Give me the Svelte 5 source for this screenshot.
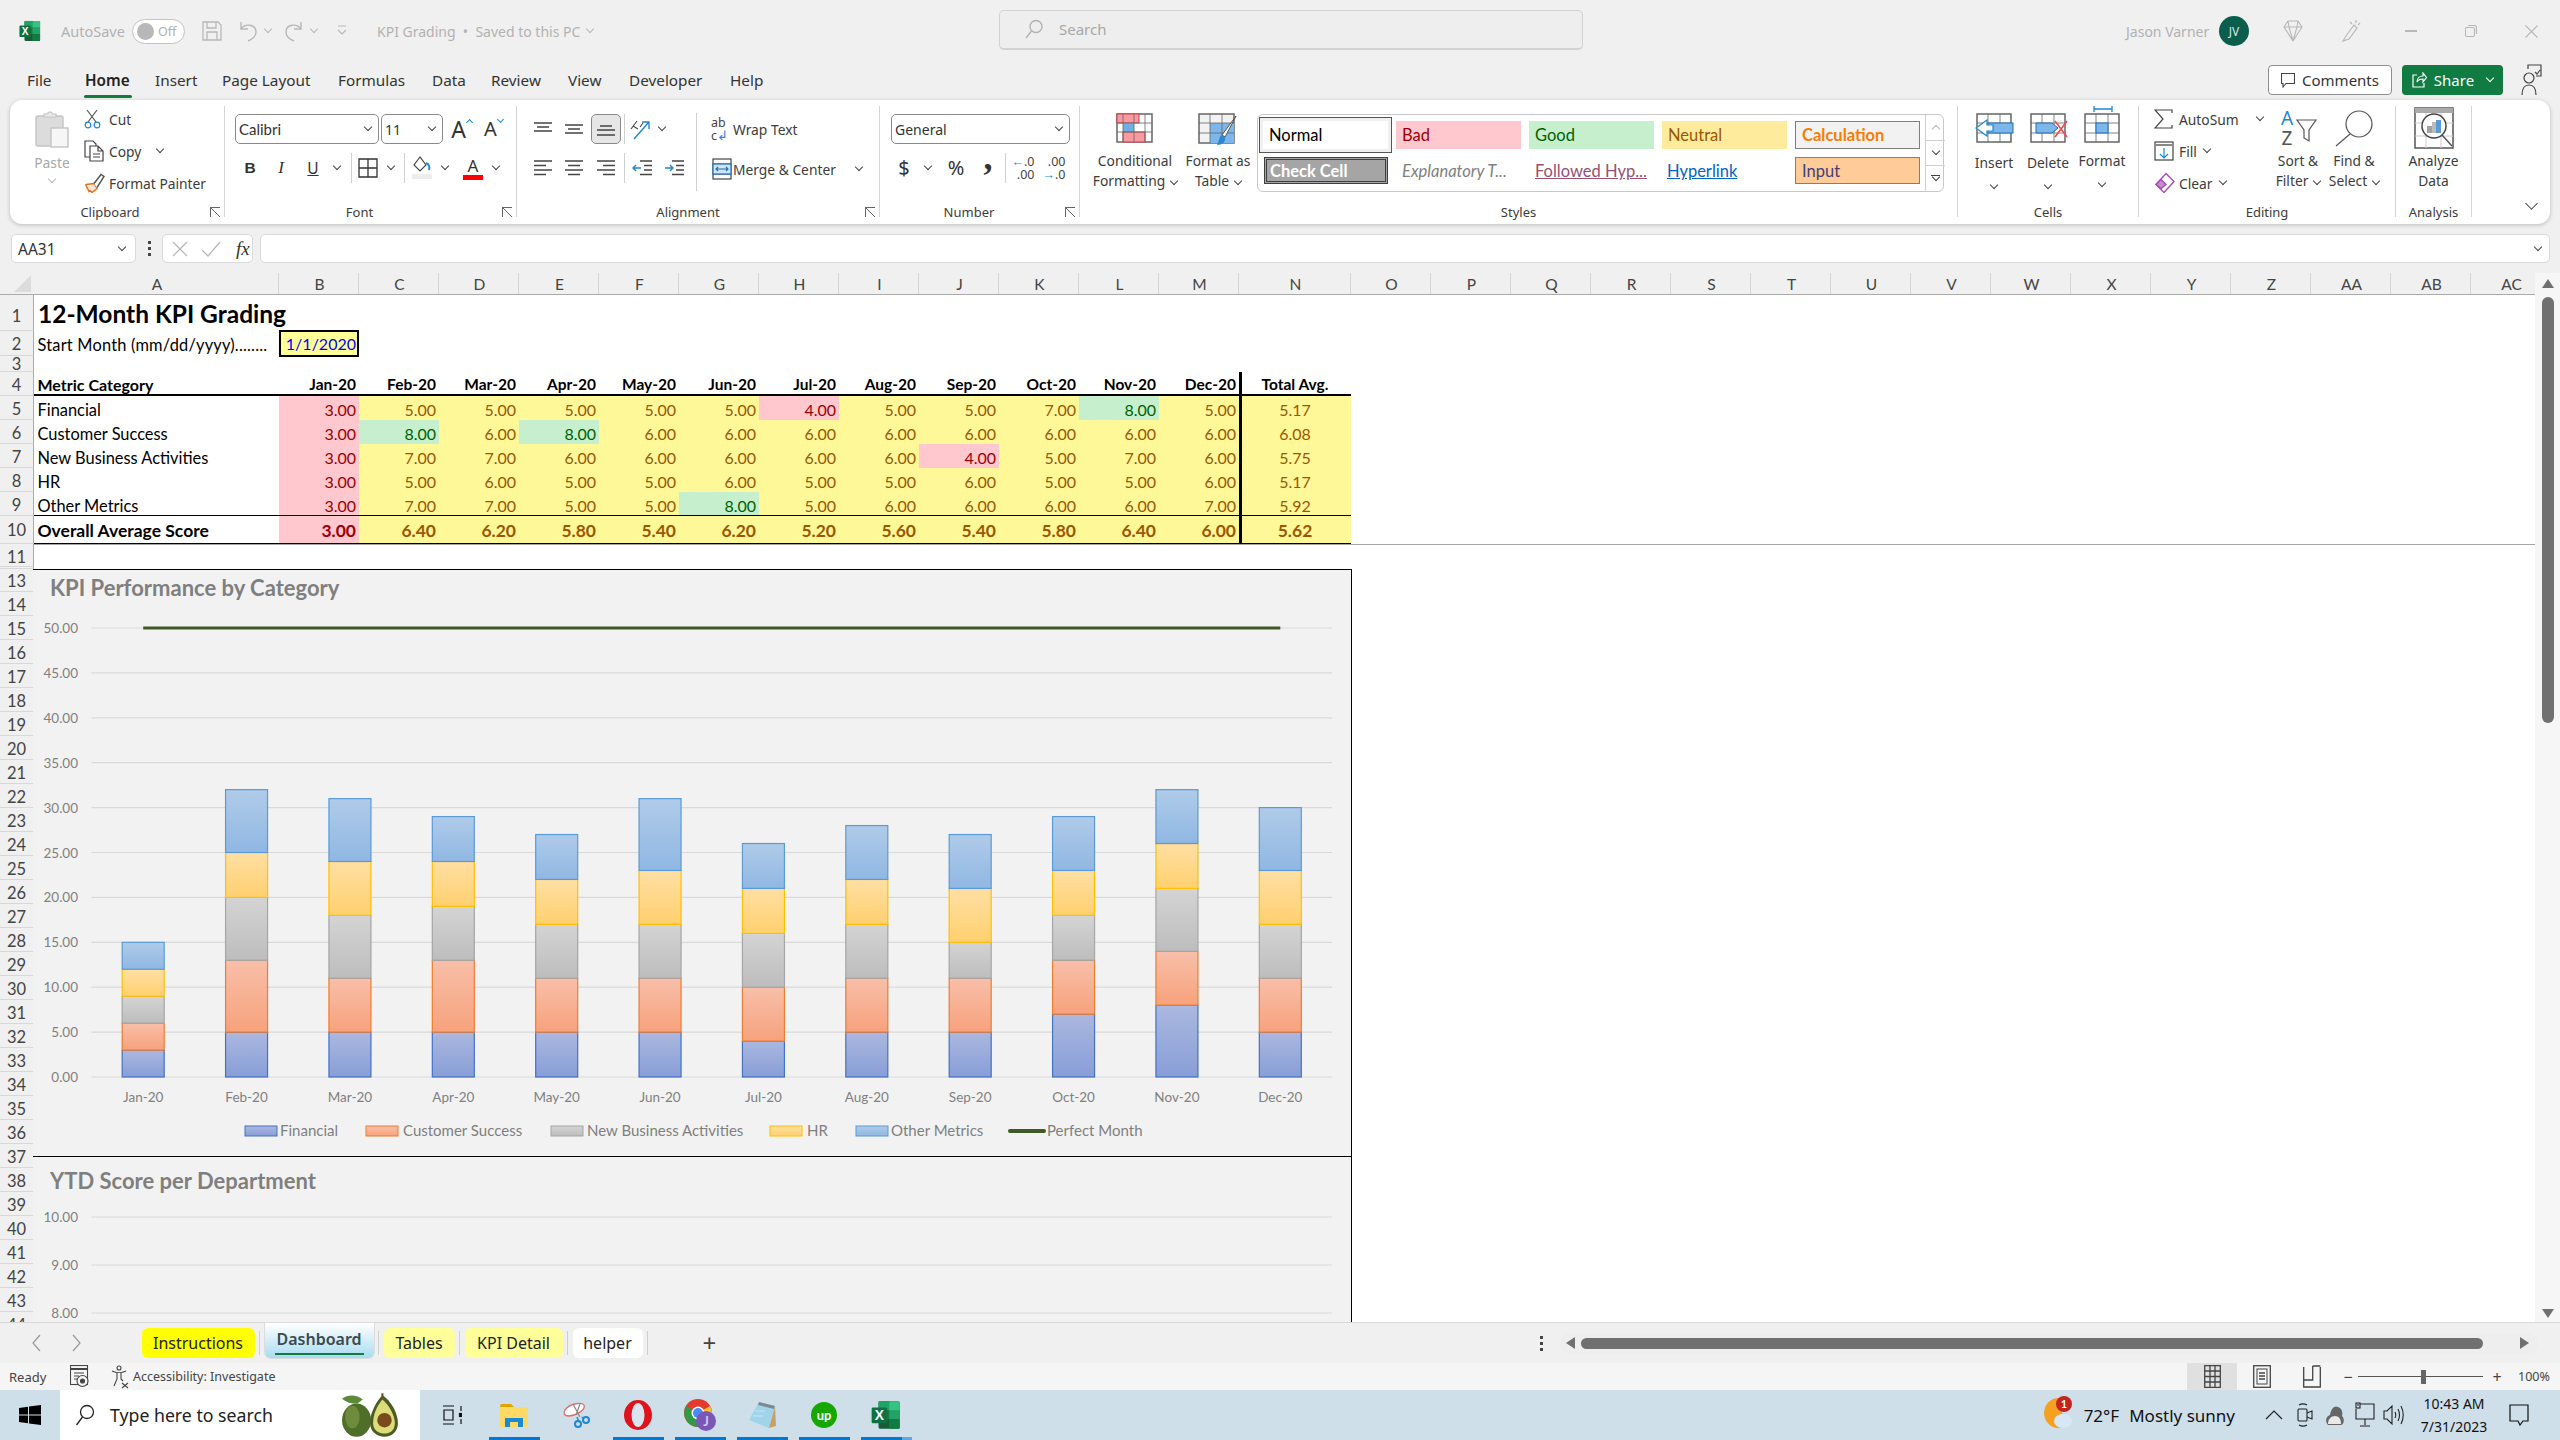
<script>
  const months = ["Jan-20", "Feb-20", "Mar-20", "Apr-20", "May-20", "Jun-20", "Jul-20", "Aug-20", "Sep-20", "Oct-20", "Nov-20", "Dec-20"];
  const colNames = ["B", "C", "D", "E", "F", "G", "H", "I", "J", "K", "L", "M"];
  const moreCols = ["O", "P", "Q", "R", "S", "T", "U", "V", "W", "X", "Y", "Z", "AA", "AB", "AC"];

  const table = [
    { name: "Financial", v: [3, 5, 5, 5, 5, 5, 4, 5, 5, 7, 8, 5], avg: "5.17" },
    { name: "Customer Success", v: [3, 8, 6, 8, 6, 6, 6, 6, 6, 6, 6, 6], avg: "6.08" },
    { name: "New Business Activities", v: [3, 7, 7, 6, 6, 6, 6, 6, 4, 5, 7, 6], avg: "5.75" },
    { name: "HR", v: [3, 5, 6, 5, 5, 6, 5, 5, 6, 5, 5, 6], avg: "5.17" },
    { name: "Other Metrics", v: [3, 7, 7, 5, 5, 8, 5, 6, 6, 6, 6, 7], avg: "5.92" }
  ];
  const overall = [3, 6.4, 6.2, 5.8, 5.4, 6.2, 5.2, 5.6, 5.4, 5.8, 6.4, 6];

  function tone(v) {
    if (v <= 4) return "bad";
    if (v >= 8) return "good";
    return "yel";
  }

  const lowerRows = Array.from({ length: 31 }, (_, i) => i + 14);

  // chart geometry, in page pixels
  const x0 = 91.5;
  const x1 = 1332;
  const y0 = 1077;
  const unit = 8.98;
  const step = (x1 - x0) / 12;
  const barW = 42;
  const ticks = [0, 5, 10, 15, 20, 25, 30, 35, 40, 45, 50];
  const series = ["fin", "cus", "nba", "hr", "oth"];
  const strokes = ["#4472c4", "#ed7d31", "#a5a5a5", "#ffc000", "#5b9bd5"];

  const bars = months.map((m, i) => {
    let acc = 0;
    const segs = table.map((r, s) => {
      const h = r.v[i] * unit;
      const y = y0 - acc - h;
      acc += h;
      return { y, h, s };
    });
    return { m, cx: x0 + step * (i + 0.5), segs };
  });

  const legend = [
    { x: 245, tx: 280, label: "Financial", s: 0 },
    { x: 366, tx: 403, label: "Customer Success", s: 1 },
    { x: 551, tx: 587, label: "New Business Activities", s: 2 },
    { x: 770, tx: 807, label: "HR", s: 3 },
    { x: 856, tx: 891, label: "Other Metrics", s: 4 }
  ];
</script>

{#snippet xl(size)}
  <svg width={size} height={size} viewBox="0 0 24 24">
    <rect x="6" y="1" width="17" height="22" rx="1.5" fill="#185c37" />
    <rect x="6" y="1" width="8.5" height="7.5" fill="#21a366" />
    <rect x="14.5" y="1" width="8.5" height="7.5" rx="1" fill="#33c481" />
    <rect x="6" y="8.5" width="8.5" height="7" fill="#107c41" />
    <rect x="14.5" y="8.5" width="8.5" height="7" fill="#21a366" />
    <rect x="14.5" y="15.5" width="8.5" height="7.5" rx="1" fill="#107c41" />
    <rect x="0.5" y="6" width="12.5" height="12.5" rx="1" fill="#0f7140" />
    <text x="6.7" y="16" text-anchor="middle" class="xl-x">X</text>
  </svg>
{/snippet}

<div class="app">
  <!-- title bar -->
  <header class="tb">
    <div class="tb-left">
      <span class="logo">{@render xl(22)}</span>
      <span class="autosave">AutoSave</span>
      <span class="toggle"><i></i><b>Off</b></span>
      <svg class="qa save" width="20" height="20" viewBox="0 0 20 20" fill="none" stroke="#b8b8b8" stroke-width="1.3">
        <path d="M1 1h15l3 3v15H1z" /><path d="M5 1v6h9V1M5 19v-8h10v8" />
      </svg>
      <svg class="qa undo" width="20" height="22" viewBox="0 0 20 22" fill="none" stroke="#b8b8b8" stroke-width="1.4">
        <path d="M2 2v7h7" /><path d="M2 9c4-6 15-5 15 3 0 4-3 7-8 9" />
      </svg>
      <span class="chev faint ch-undo"></span>
      <svg class="qa redo" width="20" height="22" viewBox="0 0 20 22" fill="none" stroke="#b8b8b8" stroke-width="1.4">
        <path d="M18 2v7h-7" /><path d="M18 9C14 3 3 4 3 12c0 4 3 7 8 9" />
      </svg>
      <span class="chev faint ch-redo"></span>
      <svg class="qa custom" width="10" height="12" viewBox="0 0 10 12" fill="none" stroke="#b8b8b8" stroke-width="1.2">
        <path d="M1 1h8M1 5l4 4 4-4" />
      </svg>
      <span class="doc">KPI Grading&nbsp; • &nbsp;Saved to this PC</span>
      <span class="chev faint ch-doc"></span>
    </div>
    <div class="search">
      <svg width="18" height="20" viewBox="0 0 18 20" fill="none" stroke="#b0b0b0" stroke-width="1.3">
        <circle cx="11" cy="7.5" r="6" /><path d="M6.5 12 1 19" />
      </svg>
      <span>Search</span>
    </div>
    <div class="tb-right">
      <span class="user">Jason Varner</span>
      <span class="avatar">JV</span>
      <svg class="tb-diamond" width="20" height="22" viewBox="0 0 20 22" fill="none" stroke="#b8b8b8" stroke-width="1.1">
        <path d="M5 1h10l4 6-9 14L1 7zM1 7h18M6 7l4 14 4-14M5 1l1 6M15 1l-1 6" />
      </svg>
      <svg class="tb-pen" width="20" height="24" viewBox="0 0 20 24" fill="none" stroke="#b8b8b8" stroke-width="1.2">
        <path d="M12 6 4 17l-3 5 6-2 8-11zM8 3l2 2M14 1v3M18 4l-2 2" />
      </svg>
      <span class="min"></span>
      <svg class="tb-rest" width="12" height="12" viewBox="0 0 12 12" fill="none" stroke="#b8b8b8" stroke-width="1.1">
        <rect x="0.5" y="2.5" width="9" height="9" rx="1.5" /><path d="M3 .5h6.5a2 2 0 0 1 2 2V9" />
      </svg>
      <svg class="tb-close" width="13" height="13" viewBox="0 0 13 13" stroke="#b8b8b8" stroke-width="1.1">
        <path d="M.5.5l12 12M12.5.5l-12 12" />
      </svg>
    </div>
  </header>

  <!-- ribbon tabs -->
  <nav class="tabs">
    <div class="tab-list">
      <span>File</span>
      <span class="on">Home</span>
      <span>Insert</span>
      <span>Page Layout</span>
      <span>Formulas</span>
      <span>Data</span>
      <span>Review</span>
      <span>View</span>
      <span>Developer</span>
      <span>Help</span>
    </div>
    <div class="tab-actions">
      <button class="comments">
        <svg width="14" height="15" viewBox="0 0 14 15" fill="none" stroke="#444" stroke-width="1.1"><path d="M.5.5h13v10H5l-3 3.5v-3.5H.5z" /></svg>
        Comments
      </button>
      <button class="share">
        <svg width="15" height="16" viewBox="0 0 15 16" fill="none" stroke="#fff" stroke-width="1.2"><path d="M5 3H1v12h11v-4M5 10c0-4 3-6 6-6V1l3.500 4.500L11 10V7c-3 0-5 1-6 3z" /></svg>
        Share <span class="chev white"></span>
      </button>
      <svg class="feedback" width="21" height="32" viewBox="0 0 21 32" fill="none" stroke="#444" stroke-width="1.2">
        <circle cx="8" cy="14" r="5" /><path d="M1 31c0-7 3-10 7-10s7 3 7 10M7 5V1h13v11h-5M14 8l2 2 3-4" />
      </svg>
    </div>
  </nav>

  <!-- ribbon -->
  <section class="ribbon">
    <div class="grp clip">
      <div class="body flex">
        <div class="paste">
          <svg width="34" height="37" viewBox="0 0 34 37" fill="none">
            <rect x="1" y="5" width="27" height="30" rx="2" fill="#dcdcdc" stroke="#c4c4c4" stroke-width="1.4" />
            <path d="M9 6V3h3l2-2h2l2 2h3v3z" fill="#e8e8e8" stroke="#c4c4c4" stroke-width="1.2" />
            <rect x="16" y="17" width="17" height="19" fill="#f6f6f6" stroke="#c4c4c4" stroke-width="1.4" />
          </svg>
          <span class="paste-t">Paste</span>
          <span class="chev faint paste-c"></span>
        </div>
        <div class="small">
          <div class="sm">
            <svg class="ic" width="18" height="20" viewBox="0 0 18 20" fill="none" stroke-width="1.2">
              <path d="M3 1l9 12M13 1 4 13" stroke="#555" />
              <circle cx="4" cy="16" r="2.800" stroke="#1e88d2" /><circle cx="13" cy="16" r="2.800" stroke="#1e88d2" />
            </svg>
            <span>Cut</span>
          </div>
          <div class="sm">
            <svg class="ic" width="20" height="22" viewBox="0 0 20 22" fill="none" stroke="#444" stroke-width="1.2">
              <path d="M6 17H1V1h8l3 3v2" /><path d="M6 6h8l5 5v10H6zM14 6v5h5M9 14h7M9 17h7" />
            </svg>
            <span>Copy</span><span class="chev copy-c"></span>
          </div>
          <div class="sm">
            <svg class="ic" width="21" height="21" viewBox="0 0 21 21" fill="none" stroke-width="1.400">
              <path d="M2 12l8-1 3 5-5 4-2-2-1 1-3-6z" fill="#fbe5d6" stroke="#e8711c" />
              <path d="M10 11l7-9 3 2-7 11" fill="#fff" stroke="#555" />
            </svg>
            <span>Format Painter</span>
          </div>
        </div>
      </div>
      <div class="lbl-row"><span class="lbl">Clipboard</span><span class="launch"></span></div>
    </div>
    <i class="sep"></i>

    <div class="grp font">
      <div class="body pad">
        <div class="font-r1">
          <div class="select"><span class="calibri">Calibri</span><i class="chev"></i></div>
          <div></div>
          <div class="select"><span>11</span><i class="chev"></i></div>
          <div class="grow"><b>A</b><i class="chev caret-up"></i></div>
          <div class="grow small-a"><b>A</b><i class="chev caret-down"></i></div>
        </div>
        <div class="font-r2">
          <b class="fb">B</b>
          <i class="fi">I</i>
          <u class="fu">U</u>
          <span class="chev"></span>
          <i class="vbar"></i>
          <svg width="20" height="20" viewBox="0 0 20 20" fill="none" stroke="#333" stroke-width="1.3"><path d="M1 1h18v18H1zM10 1v18M1 10h18" /></svg>
          <span class="chev"></span>
          <i class="vbar"></i>
          <svg width="20" height="24" viewBox="0 0 20 24" fill="none" stroke-width="1.2">
            <path d="M8 1 2 9l6 6 6-6z" stroke="#444" fill="#fff" /><path d="M14 7c3 1 4 4 3 7" stroke="#1e88d2" stroke-width="2" />
            <rect y="18" width="20" height="5" fill="#ededed" />
          </svg>
          <span class="chev"></span>
          <div></div>
          <div class="fcolor"><span>A</span><i></i></div>
          <span class="chev"></span>
        </div>
      </div>
      <div class="lbl-row"><span class="lbl">Font</span><span class="launch"></span></div>
    </div>
    <i class="sep"></i>

    <div class="grp align">
      <div class="body flex">
        <div class="al-left">
          <div class="al-r1">
            <svg width="18" height="14" viewBox="0 0 18 14" stroke="#444" stroke-width="1.4"><path d="M0 1h18M3 5h12M0 9h18" /></svg>
            <svg width="18" height="14" viewBox="0 0 18 14" stroke="#444" stroke-width="1.4"><path d="M0 3h18M3 7h12M0 11h18" /></svg>
            <div class="al-on"><svg width="18" height="16" viewBox="0 0 18 16" stroke="#444" stroke-width="1.4"><path d="M3 5h12M0 9h18M0 14h18" /></svg></div>
            <i class="vbar"></i>
            <svg width="24" height="24" viewBox="0 0 24 24" fill="none" stroke="#444" stroke-width="1.1">
              <path d="m3 12 6-8M5 9l5 3M12 10l3-4" /><path d="M6 22 21 5M14 5h7v7" stroke="#1e88d2" stroke-width="1.4" />
            </svg>
            <span class="chev"></span>
          </div>
          <div class="al-r2">
            <svg width="18" height="16" viewBox="0 0 18 16" stroke="#444" stroke-width="1.4"><path d="M0 1h18M0 5.500h12M0 10h18M0 14.500h12" /></svg>
            <svg width="18" height="16" viewBox="0 0 18 16" stroke="#444" stroke-width="1.4"><path d="M0 1h18M3 5.500h12M0 10h18M3 14.500h12" /></svg>
            <svg width="18" height="16" viewBox="0 0 18 16" stroke="#444" stroke-width="1.4"><path d="M0 1h18M6 5.500h12M0 10h18M6 14.500h12" /></svg>
            <i class="vbar"></i>
            <svg width="20" height="16" viewBox="0 0 20 16" fill="none" stroke-width="1.4"><path d="M8 1h12M12 5.500h8M12 10h8M8 14.500h12" stroke="#444" /><path d="M9 8H1M4 5 1 8l3 3" stroke="#1e88d2" /></svg>
            <svg width="20" height="16" viewBox="0 0 20 16" fill="none" stroke-width="1.4"><path d="M8 1h12M12 5.500h8M12 10h8M8 14.500h12" stroke="#444" /><path d="M1 8h8M6 5l3 3-3 3" stroke="#1e88d2" /></svg>
          </div>
        </div>
        <i class="vbar tall"></i>
        <div class="al-right">
          <div class="al-item">
            <span class="wrap-ic">ab<br />c<i>↲</i></span>
            <span>Wrap Text</span>
          </div>
          <div class="al-item">
            <svg width="20" height="22" viewBox="0 0 20 22" fill="none" stroke="#444" stroke-width="1.2">
              <rect x="1" y="1" width="18" height="20" /><path d="M1 6h18M1 16h18" />
              <rect x="1" y="6" width="18" height="10" fill="#cfe4f7" stroke="#1e6fb8" /><path d="M4 11h12M6 9l-2 2 2 2M14 9l2 2-2 2" stroke="#1e6fb8" />
            </svg>
            <span>Merge &amp; Center</span><span class="chev merge-c"></span>
          </div>
        </div>
      </div>
      <div class="lbl-row"><span class="lbl">Alignment</span><span class="launch"></span></div>
    </div>
    <i class="sep"></i>

    <div class="grp num-g">
      <div class="body pad">
        <div class="select general"><span>General</span><i class="chev"></i></div>
        <div class="num-r2">
          <span class="big-sym">$</span>
          <span class="chev"></span>
          <span class="big-sym">%</span>
          <span class="big-sym comma">,</span>
          <i class="vbar"></i>
          <span class="dec-ic"><em>←</em>.0<br />.00</span>
          <span class="dec-ic">.00<br /><em>→</em>.0</span>
        </div>
      </div>
      <div class="lbl-row"><span class="lbl">Number</span><span class="launch"></span></div>
    </div>
    <i class="sep"></i>

    <div class="grp styles">
      <div class="body flex">
        <div class="bigbtn cond">
          <svg width="38" height="51" viewBox="0 0 38 51" fill="none">
            <rect x="1" y="14" width="35" height="28" fill="#fff" stroke="#666" stroke-width="1.500" />
            <rect x="1" y="14" width="22" height="9" fill="#f79aa1" stroke="#d63d46" />
            <rect x="7" y="23" width="11" height="9" fill="#6cb0e6" />
            <rect x="7" y="32" width="22" height="10" fill="#f79aa1" stroke="#d63d46" />
            <path d="M7 14v28M18 14v28M29 14v28M1 23h35M1 32h35" stroke="#666" stroke-width=".8" />
          </svg>
          <span>Conditional</span>
          <span>Formatting<i class="chev"></i></span>
        </div>
        <div class="bigbtn fmt">
          <svg width="40" height="51" viewBox="0 0 40 51" fill="none">
            <rect x="1" y="14" width="35" height="29" fill="#f2f2f2" stroke="#666" stroke-width="1.500" />
            <rect x="12" y="23" width="24" height="20" fill="#7db6ea" />
            <path d="M12 14v29M24 14v29M1 23h35M1 33h35" stroke="#666" stroke-width=".8" />
            <path d="M38 16 27 37l-3-2z" fill="#fff" stroke="#555" /><path d="M24 35c-3 1-2 4-5 10 5 0 9-3 8-8z" fill="#2e86d0" />
          </svg>
          <span>Format as</span>
          <span>Table<i class="chev"></i></span>
        </div>
        <div class="gallery">
          <div class="g-grid">
            <div class="st normal"><span>Normal</span></div>
            <div class="st bad-s">Bad</div>
            <div class="st good-s">Good</div>
            <div class="st neutral">Neutral</div>
            <div class="st calc">Calculation</div>
            <div class="st check"><span>Check Cell</span></div>
            <div class="st expl">Explanatory T...</div>
            <div class="st foll"><span>Followed Hyp...</span></div>
            <div class="st hyper"><span>Hyperlink</span></div>
            <div class="st input">Input</div>
          </div>
          <div class="g-arrows">
            <span><i class="chev caret-gal faint"></i></span>
            <span><i class="chev"></i></span>
            <span class="more"><i class="chev"></i></span>
          </div>
        </div>
      </div>
      <div class="lbl-row"><span class="lbl plain">Styles</span></div>
    </div>
    <i class="sep"></i>

    <div class="grp cells">
      <div class="body flex">
        <div class="bigbtn cell-b low">
          <svg width="40" height="51" viewBox="0 0 40 51" fill="none">
            <rect x="3" y="14" width="34" height="28" fill="#fff" stroke="#666" stroke-width="1.500" />
            <path d="M14 14v28M26 14v28M3 23h34M3 33h34" stroke="#666" stroke-width=".8" />
            <rect x="14" y="23" width="25" height="10" fill="#7db6ea" stroke="#1e6fb8" />
            <path d="M13 20 2 28l11 8v-5h6v-6h-6z" fill="#fff" stroke="#1e88d2" stroke-width="1.200" />
          </svg>
          <span>Insert</span><i class="chev btm"></i>
        </div>
        <div class="bigbtn cell-b low">
          <svg width="40" height="51" viewBox="0 0 40 51" fill="none">
            <rect x="3" y="14" width="34" height="28" fill="#fff" stroke="#666" stroke-width="1.500" />
            <path d="M14 14v28M26 14v28M3 23h34M3 33h34" stroke="#666" stroke-width=".8" />
            <path d="M8 23h16l6 5-6 5H8z" fill="#7db6ea" stroke="#1e6fb8" />
            <path d="m27 21 12 16M39 21 27 37" stroke="#f0494f" stroke-width="1.600" />
          </svg>
          <span>Delete</span><i class="chev btm"></i>
        </div>
        <div class="bigbtn cell-b">
          <svg width="36" height="51" viewBox="0 0 36 51" fill="none">
            <path d="M10 9h18M10 6v6M28 6v6" stroke="#1e88d2" stroke-width="1.300" />
            <rect x="1" y="14" width="34" height="28" fill="#fff" stroke="#666" stroke-width="1.500" />
            <path d="M1 23h34M1 33h34M12 14v28M24 14v28" stroke="#666" stroke-width=".8" />
            <rect x="12" y="23" width="12" height="10" fill="#7db6ea" stroke="#1e6fb8" />
          </svg>
          <span>Format</span><i class="chev btm"></i>
        </div>
      </div>
      <div class="lbl-row"><span class="lbl plain">Cells</span></div>
    </div>
    <i class="sep"></i>

    <div class="grp editing">
      <div class="body flex">
        <div class="small ed-small">
          <div class="sm">
            <svg class="ic" width="19" height="20" viewBox="0 0 19 20" fill="none" stroke="#444" stroke-width="1.200"><path d="M18 4V1H1l8 9-8 9h17v-3" /></svg>
            <span>AutoSum</span><span class="chev sum-c"></span>
          </div>
          <div class="sm">
            <svg class="ic" width="20" height="20" viewBox="0 0 20 20" fill="none" stroke="#444" stroke-width="1.200">
              <rect x="1" y="1" width="18" height="18" /><path d="M1 4h18" stroke-width="2" stroke="#888" /><path d="M10 7v10M6 13l4 4 4-4" stroke="#1e88d2" />
            </svg>
            <span>Fill</span><span class="chev near"></span>
          </div>
          <div class="sm">
            <svg class="ic" width="21" height="21" viewBox="0 0 21 21" fill="none" stroke="#a64db5" stroke-width="1.400">
              <path d="M12 1l8 8-10 11-8-8z" fill="#fff" /><path d="m7 16-5-4 5-5 5 5z" fill="#c68bd4" />
            </svg>
            <span>Clear</span><span class="chev near"></span>
          </div>
        </div>
        <div class="bigbtn sort">
          <svg width="40" height="51" viewBox="0 0 40 51" fill="none">
            <text x="9" y="25" class="az blue">A</text><text x="9" y="45" class="az">Z</text>
            <path d="M19 20h19l-7 10v11l-5-3v-8z" fill="#fff" stroke="#555" stroke-width="1.200" />
          </svg>
          <span>Sort &amp;</span>
          <span>Filter<i class="chev"></i></span>
        </div>
        <div class="bigbtn find">
          <svg width="40" height="51" viewBox="0 0 40 51" fill="none" stroke="#555" stroke-width="1.200">
            <circle cx="25" cy="24" r="13" /><path d="M16 34 2 46" />
          </svg>
          <span>Find &amp;</span>
          <span>Select<i class="chev"></i></span>
        </div>
      </div>
      <div class="lbl-row"><span class="lbl plain">Editing</span></div>
    </div>
    <i class="sep"></i>

    <div class="grp analysis">
      <div class="body flex">
        <div class="bigbtn an">
          <svg width="40" height="51" viewBox="0 0 40 51" fill="none">
            <rect x="1" y="8" width="38" height="40" fill="#fff" stroke="#555" stroke-width="1.500" />
            <rect x="1" y="8" width="38" height="5" fill="#aaa" />
            <path d="M1 23h38M1 36h38M12 13v35M27 13v35" stroke="#ccc" />
            <circle cx="20" cy="26" r="12" fill="#fff" stroke="#444" stroke-width="1.500" />
            <path d="m28 35 10 11" stroke="#555" stroke-width="1.500" />
            <rect x="13" y="26" width="5" height="7" fill="#a0a0a0" /><rect x="18" y="22" width="4" height="11" fill="#bbb" /><rect x="22" y="20" width="5" height="13" fill="#5b9bd5" />
          </svg>
          <span>Analyze</span>
          <span>Data</span>
        </div>
      </div>
      <div class="lbl-row"><span class="lbl plain">Analysis</span></div>
    </div>
    <i class="sep"></i>
    <span class="chev collapse"></span>
  </section>

  <!-- formula bar -->
  <div class="fbar">
    <div class="namebox"><span>AA31</span><i class="chev"></i></div>
    <span class="dots"><i></i><i></i><i></i></span>
    <div class="fxbox">
      <svg width="16" height="16" viewBox="0 0 16 16" stroke="#b5b5b5" stroke-width="1.200"><path d="m1 1 14 14M15 1 1 15" /></svg>
      <svg width="20" height="16" viewBox="0 0 20 16" fill="none" stroke="#b5b5b5" stroke-width="1.200"><path d="m1 9 6 6L19 1" /></svg>
      <span class="fx">fx</span>
    </div>
    <div class="finput"><i class="chev"></i></div>
  </div>

  <!-- sheet -->
  <div class="sheet">
    <div class="grid">
      <div class="colhead">
        <div class="corner"><i></i></div>
        <div class="ch a">A</div>
        {#each colNames as c}<div class="ch">{c}</div>{/each}
        <div class="ch n">N</div>
        {#each moreCols as c}<div class="ch">{c}</div>{/each}
      </div>

      <div class="cellsarea">
        <div class="row r1">
          <div class="rh">1</div>
          <div class="c a title">12-Month KPI Grading</div>
        </div>
        <div class="row r2">
          <div class="rh">2</div>
          <div class="c a">Start Month (mm/dd/yyyy)........</div>
          <div class="c startdate">1/1/2020</div>
        </div>
        <div class="row r3"><div class="rh">3</div></div>
        <div class="row r4">
          <div class="rh">4</div>
          <div class="c a hd">Metric Category</div>
          {#each months as m}<div class="c num hd">{m}</div>{/each}
          <div class="c n hd">Total Avg.</div>
        </div>
        {#each table as r, i}
          <div class="row" class:last={i === 4}>
            <div class="rh">{i + 5}</div>
            <div class="c a">{r.name}</div>
            {#each r.v as v}<div class="c num {tone(v)}">{v.toFixed(2)}</div>{/each}
            <div class="c n yel">{r.avg}</div>
          </div>
        {/each}
        <div class="row r10">
          <div class="rh">10</div>
          <div class="c a">Overall Average Score</div>
          {#each overall as v}<div class="c num {tone(v)}">{v.toFixed(2)}</div>{/each}
          <div class="c n yel">5.62</div>
        </div>
        <div class="row r11"><div class="rh">11</div></div>
        <div class="row r12"><div class="rh"></div></div>
        <div class="row r13"><div class="rh">13</div></div>
        {#each lowerRows as n}
          <div class="row"><div class="rh">{n}</div></div>
        {/each}

        <div class="charts">
          <svg class="chart1" width="1319" height="588" viewBox="33 568 1319 588">
            <defs>
              <linearGradient id="fin" x1="0" y1="0" x2="0" y2="1"><stop offset="0" stop-color="#abb8df" /><stop offset="1" stop-color="#889ed8" /></linearGradient>
              <linearGradient id="cus" x1="0" y1="0" x2="0" y2="1"><stop offset="0" stop-color="#f8bfa9" /><stop offset="1" stop-color="#f7a27c" /></linearGradient>
              <linearGradient id="nba" x1="0" y1="0" x2="0" y2="1"><stop offset="0" stop-color="#d4d4d4" /><stop offset="1" stop-color="#bdbdbd" /></linearGradient>
              <linearGradient id="hr" x1="0" y1="0" x2="0" y2="1"><stop offset="0" stop-color="#ffdfa3" /><stop offset="1" stop-color="#ffd06f" /></linearGradient>
              <linearGradient id="oth" x1="0" y1="0" x2="0" y2="1"><stop offset="0" stop-color="#b0cbe9" /><stop offset="1" stop-color="#90b7e3" /></linearGradient>
            </defs>
            <text x="50" y="596" class="ctitle">KPI Performance by Category</text>
            {#each ticks as t}
              <line x1={x0} x2={x1} y1={y0 - t * unit} y2={y0 - t * unit} class="gridline" />
              <text x="78" y={y0 - t * unit + 5} text-anchor="end" class="axis">{t.toFixed(2)}</text>
            {/each}
            {#each bars as b}
              {#each b.segs as s}
                <rect x={b.cx - barW / 2} y={s.y} width={barW} height={s.h} fill="url(#{series[s.s]})" stroke={strokes[s.s]} stroke-width="1.200" />
              {/each}
              <text x={b.cx} y="1102" text-anchor="middle" class="axis">{b.m}</text>
            {/each}
            <line x1={bars[0].cx} x2={bars[11].cx} y1={y0 - 50 * unit} y2={y0 - 50 * unit} stroke="#3f5a26" stroke-width="3" />
            {#each legend as l}
              <rect x={l.x} y="1126" width="32" height="10" fill="url(#{series[l.s]})" stroke={strokes[l.s]} />
              <text x={l.tx} y="1136" class="leg">{l.label}</text>
            {/each}
            <line x1="1010" x2="1044" y1="1131" y2="1131" stroke="#3f5a26" stroke-width="4" stroke-linecap="round" />
            <text x="1047" y="1136" class="leg">Perfect Month</text>
          </svg>
          <svg class="chart2" width="1319" height="167" viewBox="33 1157 1319 167">
            <text x="50" y="1189" class="ctitle">YTD Score per Department</text>
            {#each [10, 9, 8] as t, i}
              <line x1={x0} x2={x1} y1={1217 + i * 48} y2={1217 + i * 48} class="gridline" />
              <text x="78" y={1222 + i * 48} text-anchor="end" class="axis">{t.toFixed(2)}</text>
            {/each}
          </svg>
        </div>
      </div>
    </div>
    <div class="vscroll">
      <i class="tri up-t"></i>
      <div class="vthumb"></div>
      <i class="tri down-t"></i>
    </div>
  </div>

  <!-- sheet tabs -->
  <div class="sheettabs">
    <div class="navs">
      <svg width="9" height="18" viewBox="0 0 9 18" fill="none" stroke="#999" stroke-width="1.200"><path d="M8 1 1 9l7 8" /></svg>
      <svg width="9" height="18" viewBox="0 0 9 18" fill="none" stroke="#999" stroke-width="1.200"><path d="m1 1 7 8-7 8" /></svg>
    </div>
    <div class="st-tab instr">Instructions</div>
    <i class="tabsep"></i>
    <div class="st-tab dash"><span>Dashboard</span></div>
    <i class="tabsep"></i>
    <div class="st-tab pale tables">Tables</div>
    <i class="tabsep"></i>
    <div class="st-tab pale kpi">KPI Detail</div>
    <i class="tabsep"></i>
    <div class="st-tab helper">helper</div>
    <i class="tabsep"></i>
    <span class="plus">+</span>
    <span class="dots sdots"><i></i><i></i><i></i></span>
    <div class="hscroll">
      <i class="tri left-t"></i>
      <div class="hthumb"></div>
      <i class="tri right-t"></i>
    </div>
  </div>

  <!-- status bar -->
  <footer class="status">
    <span class="ready">Ready</span>
    <svg class="st-ic" width="19" height="24" viewBox="0 0 19 24" fill="none" stroke="#444" stroke-width="1.100">
      <rect x=".5" y=".5" width="17" height="19" /><path d="M.5 4h17" stroke-width="2" /><path d="M4 8h10M4 11h5M4 14h4" />
      <circle cx="12.500" cy="16" r="5.500" fill="#f5f5f5" /><circle cx="12.500" cy="16" r="2" fill="#444" />
    </svg>
    <svg class="st-ic2" width="18" height="24" viewBox="0 0 18 24" fill="none" stroke="#444" stroke-width="1.100">
      <circle cx="8" cy="3" r="2" /><path d="M1 6c4 2 10 2 14 0M6 8v6l-3 7M10 8v6l2 2M11 18l6 5M17 18l-6 5" />
    </svg>
    <span class="access">Accessibility: Investigate</span>
    <div class="views">
      <div class="view active">
        <svg width="17" height="23" viewBox="0 0 17 23" fill="none" stroke="#444" stroke-width="1.300"><path d="M.7.7h15.600v21.600H.7zM.7 6h15.600M.7 11.500h15.600M.7 17h15.600M6 .7v21.600M11 .7v21.600" /></svg>
      </div>
      <div class="view">
        <svg width="18" height="23" viewBox="0 0 18 23" fill="none" stroke="#444" stroke-width="1.300"><rect x=".7" y=".7" width="16.600" height="21.600" /><rect x="4" y="4" width="10" height="15" stroke-width="1" /><path d="M6 8h6M6 11h6M6 14h6" /></svg>
      </div>
      <div class="view">
        <svg width="18" height="23" viewBox="0 0 18 23" fill="none" stroke="#444" stroke-width="1.300"><path d="M.7 2v20h16.600V2M.7 15h9V1M9.700 1h7.600" /></svg>
      </div>
      <span class="zm">−</span>
      <div class="slider"><i></i></div>
      <span class="zm">+</span>
      <span class="pct">100%</span>
    </div>
  </footer>

  <!-- windows taskbar -->
  <div class="taskbar">
    <div class="start">
      <svg width="22" height="20" viewBox="0 0 22 20" fill="#000"><path d="M0 3l9-1.300V9.500H0zM10 1.500 22 0v9.500H10zM0 10.500h9v7.800L0 17zM10 10.500h12V20l-12-1.500z" /></svg>
    </div>
    <div class="winsearch">
      <svg width="20" height="22" viewBox="0 0 20 22" fill="none" stroke="#222" stroke-width="1.300"><circle cx="12" cy="8" r="6.500" /><path d="m7.500 13-6 8" /></svg>
      <span>Type here to search</span>
      <svg class="avocado" width="60" height="44" viewBox="0 0 58 42">
        <path d="M2 5c6-4 14-4 20 1l-5 4C11 10 6 9 2 5z" fill="#5c8a3a" />
        <ellipse cx="16" cy="26" rx="14" ry="16" fill="#4f6e28" />
        <ellipse cx="12" cy="23" rx="7" ry="11" fill="#6e8c3c" />
        <path d="M41 2c8 5 15 17 15 27 0 8-6 13-13 13s-14-5-14-13C29 19 35 8 41 2z" fill="#4c5c22" />
        <path d="M41 6c6 5 12 15 12 23 0 7-5 10-10 10s-11-3-11-10c0-9 4-17 9-23z" fill="#dcdc7a" />
        <circle cx="43" cy="26" r="7" fill="#7a4a1e" />
        <path d="M41 0v4" stroke="#7a4a1e" stroke-width="2" />
      </svg>
    </div>
    <div class="slot first">
      <svg width="20" height="20" viewBox="0 0 20 20" fill="none" stroke="#111" stroke-width="1.200">
        <path d="M1 1h11M1 19h11M2 5h9v10H2zM19 1v5M19 14v5" /><rect x="17.500" y="8.500" width="3" height="3" fill="#111" />
      </svg>
    </div>
    <div class="slot open">
      <svg width="28" height="24" viewBox="0 0 28 24">
        <path d="M0 3a2 2 0 0 1 2-2h9l3 3H0z" fill="#e2a400" />
        <rect y="4" width="28" height="20" rx="1.500" fill="#ffd966" />
        <path d="M5 24v-9h18v9h-5v-5h-8v5z" fill="#1b8ad6" />
      </svg>
    </div>
    <div class="slot">
      <svg width="28" height="28" viewBox="0 0 28 28" fill="none">
        <path d="M3 9C8 2 20 1 22 4c2 4-6 10-15 11-5 0-6-3-4-6z" fill="#fff" stroke="#e36a6a" stroke-width="1.300" />
        <path d="M11 3l7 13M18 3l-4 11" stroke="#888" stroke-width="1.200" />
        <circle cx="16" cy="23" r="3" stroke="#1e88d2" stroke-width="2" /><circle cx="24" cy="19" r="3" stroke="#1e88d2" stroke-width="2" />
        <path d="m15 16 2 5M20 16l2 2" stroke="#1e88d2" stroke-width="1.500" />
      </svg>
    </div>
    <div class="slot open">
      <svg width="30" height="30" viewBox="0 0 30 30" fill="none">
        <ellipse cx="15" cy="15" rx="14" ry="15" fill="#e0121c" />
        <ellipse cx="15" cy="15" rx="6.500" ry="12" fill="#d8e4ee" />
      </svg>
    </div>
    <div class="slot open">
      <svg width="32" height="32" viewBox="0 0 32 32">
        <circle cx="14" cy="14" r="14" fill="#e33b2e" />
        <path d="M14 14 26 7a14 14 0 0 1-7 20z" fill="#fbc02d" />
        <path d="M14 14 19 27A14 14 0 0 1 2 7z" fill="#2e9b47" />
        <circle cx="14" cy="14" r="6.500" fill="#fff" /><circle cx="14" cy="14" r="5" fill="#4a8af4" />
        <circle cx="22" cy="22" r="10" fill="#7c55b8" />
        <text x="22" y="27" text-anchor="middle" class="ch-j">J</text>
      </svg>
    </div>
    <div class="slot open">
      <svg width="28" height="28" viewBox="0 0 28 28">
        <path d="M11 1 27 5l-6 22L1 19z" fill="#9fd4ea" />
        <path d="M11 1 27 5l-1 3L10 4z" fill="#808890" />
        <path d="M21 27 27 5l1 20z" fill="#c9a063" />
        <path d="M5 15h10M7 10h10" stroke="#c8e6f2" />
      </svg>
    </div>
    <div class="slot open">
      <span class="up">up</span>
    </div>
    <div class="slot open active">{@render xl(30)}</div>

    <div class="tray">
      <div class="weather">
        <svg width="30" height="46" viewBox="0 0 30 46">
          <path d="M16 6a14 15 0 1 0 6 28" fill="#f5a020" />
          <ellipse cx="20" cy="29" rx="9" ry="7" fill="#d8e7f5" />
          <circle cx="21" cy="12" r="8" fill="#c4241c" />
          <text x="21" y="16" text-anchor="middle" class="badge-1">1</text>
        </svg>
        <span class="temp">72°F</span>
        <span class="sky">Mostly sunny</span>
      </div>
      <svg class="tr t1" width="18" height="10" viewBox="0 0 18 10" fill="none" stroke="#222" stroke-width="1.200"><path d="m1 9 8-8 8 8" /></svg>
      <svg class="tr t2" width="16" height="28" viewBox="0 0 16 28" fill="none" stroke="#222" stroke-width="1.100">
        <path d="M2 4a8 8 0 0 1 8 0M2 24a8 8 0 0 0 8 0" /><rect x="1" y="8" width="9" height="12" rx="1" /><path d="m10 12 5-2v8l-5-2" />
      </svg>
      <svg class="tr t3" width="20" height="22" viewBox="0 0 20 22"><path d="M3 21c-4-5-1-9 2-10C6 4 10 1 13 3c4 1 5 6 4 9 3 3 2 8-1 9z" fill="#666" /><path d="M3 20c0-5 3-8 7-8s6 3 6 8z" fill="#e9e9e9" /></svg>
      <svg class="tr t4" width="20" height="28" viewBox="0 0 20 28" fill="none" stroke="#222" stroke-width="1.100">
        <path d="M5 3h14v15H1V8M10 18v6M5 25h10" /><rect x="1" y="2" width="4" height="5" /><path d="M2 4h2" />
      </svg>
      <svg class="tr t5" width="22" height="24" viewBox="0 0 22 24" fill="none" stroke="#222" stroke-width="1.100">
        <path d="M1 8h3l5-5v18l-5-5H1zM12 9c1 2 1 4 0 6M15 6c2 4 2 8 0 12M18 3c3 6 3 12 0 18" />
      </svg>
      <div class="clock"><span>10:43 AM</span><span>7/31/2023</span></div>
      <svg class="notif" width="20" height="22" viewBox="0 0 20 22" fill="none" stroke="#111" stroke-width="1.200"><path d="M1 1h18v16h-5l-3 4-2-4H1z" /></svg>
    </div>
  </div>
</div>

<style>
  :global(body) {
    margin: 0;
    background: #f0f0f0;
  }

  .app {
    width: 2560px;
    height: 1440px;
    overflow: hidden;
    display: flex;
    flex-direction: column;
    font-family: "Noto Sans", "Open Sans", sans-serif;
    font-size: 13.8px;
    color: #3c3c3c;
    background: #f0f0f0;
  }

  .chev {
    display: inline-block;
    width: 5px;
    height: 5px;
    border: solid #444;
    border-width: 0 1.3px 1.3px 0;
    transform: translateY(-2px) rotate(45deg);
  }
  .chev.faint { border-color: #b8b8b8; }
  .chev.white { border-color: #fff; }
  .chev.caret-gal { transform: translateY(2px) rotate(225deg); }

  /* title bar */
  .tb {
    height: 62px;
    display: flex;
    align-items: center;
    color: #b2b2b2;
    font-size: 15px;
  }
  .tb-left {
    width: 999px;
    flex: none;
    display: flex;
    align-items: center;
    padding-left: 19px;
    box-sizing: border-box;
  }
  .logo { width: 42px; display: flex; }
  .autosave { width: 71px; font-size: 14.5px; }
  .toggle {
    width: 53px;
    height: 25px;
    box-sizing: border-box;
    border: 1.5px solid #c4c4c4;
    border-radius: 13px;
    background: #fff;
    display: flex;
    align-items: center;
    padding-left: 4px;
    gap: 4px;
    font-size: 12.5px;
  }
  .toggle i { width: 17px; height: 17px; border-radius: 50%; background: #b8b8b8; }
  .toggle b { font-weight: 400; }
  .qa { flex: none; }
  .save { margin-left: 17px; }
  .undo { margin-left: 17px; }
  .ch-undo { margin: 0 0 0 6px; }
  .redo { margin-left: 12px; }
  .ch-redo { margin-left: 8px; }
  .custom { margin-left: 20px; }
  .doc { margin-left: 30px; font-size: 14px; white-space: nowrap; }
  .ch-doc { margin-left: 7px; }

  .search {
    width: 584px;
    height: 40px;
    margin-top: -3px;
    flex: none;
    box-sizing: border-box;
    background: #eeeeee;
    border: 1px solid #d2d2d2;
    border-bottom-width: 2px;
    border-radius: 5px;
    display: flex;
    align-items: center;
    padding-left: 25px;
    gap: 16px;
    color: #a8a8a8;
    font-size: 15px;
  }

  .tb-right {
    flex: 1;
    display: flex;
    align-items: center;
    padding-left: 543px;
  }
  .user { width: 93px; white-space: nowrap; font-size: 14px; }
  .avatar {
    width: 30px;
    height: 30px;
    border-radius: 50%;
    background: #0b5e4d;
    color: #d8e8e4;
    font-size: 12px;
    display: flex;
    align-items: center;
    justify-content: center;
    flex: none;
  }
  .tb-diamond { margin-left: 34px; flex: none; }
  .tb-pen { margin-left: 39px; flex: none; }
  .min { width: 12px; height: 1.5px; background: #b8b8b8; margin-left: 43px; flex: none; }
  .tb-rest { margin-left: 48px; flex: none; }
  .tb-close { margin-left: 48px; flex: none; }

  /* ribbon tabs */
  .tabs {
    height: 38px;
    display: flex;
    padding-left: 27px;
    box-sizing: border-box;
  }
  .tab-list {
    display: grid;
    grid-template-columns: 58px 70px 67px 116px 94px 59px 77px 61px 101px 50px;
    font-size: 15.3px;
    color: #333;
    align-items: center;
    height: 36px;
    padding-bottom: 2px;
  }
  .tab-list span { white-space: nowrap; position: relative; line-height: 36px; }
  .tab-list .on { font-weight: 600; color: #222; }
  .tab-list .on::after {
    content: "";
    position: absolute;
    left: -1px;
    right: 23px;
    bottom: 0;
    height: 3px;
    background: #107c41;
    border-radius: 2px;
  }
  .tab-actions {
    margin-left: auto;
    padding-right: 18px;
    height: 38px;
    display: flex;
    align-items: flex-start;
    padding-top: 3px;
    box-sizing: border-box;
  }
  .tab-actions button {
    height: 30px;
    font: inherit;
    font-size: 15px;
    display: flex;
    align-items: center;
    justify-content: center;
    gap: 7px;
    padding: 0;
    border-radius: 4px;
    box-sizing: border-box;
  }
  .comments { width: 124px; background: #fff; border: 1px solid #8f8f8f; color: #333; }
  .share { width: 101px; margin-left: 10px; background: #107c41; border: none; color: #fff; font-weight: 500; }
  .share .chev { margin-left: 6px; }
  .feedback { margin: -1px 0 0 18px; }

  /* ribbon */
  .ribbon {
    height: 124px;
    margin: 0 10px;
    background: #fff;
    border-radius: 12px;
    box-shadow: 0 1px 4px rgba(0, 0, 0, 0.22);
    display: flex;
    flex: none;
    position: relative;
    color: #3c3c3c;
  }
  .sep {
    width: 1px;
    height: 111px;
    margin-top: 6px;
    background: #d5d5d5;
    flex: none;
  }
  .grp { display: flex; flex-direction: column; flex: none; }
  .body { height: 100px; box-sizing: border-box; }
  .flex { display: flex; }
  .pad { padding-top: 14px; }
  .lbl-row { height: 24px; display: flex; align-items: center; font-size: 13px; }
  .lbl { flex: 1; text-align: center; padding-right: 18px; }
  .lbl.plain { padding-right: 0; }
  .clip .lbl { padding-right: 0; }
  .align .lbl { padding-right: 6px; }
  .cells .lbl.plain { padding-right: 9px; }
  .editing .lbl.plain { padding-right: 15px; }
  .launch {
    width: 9px;
    height: 9px;
    margin-right: 4px;
    border: solid #666;
    border-width: 1px 0 0 1px;
    background: linear-gradient(45deg, transparent 45%, #666 45%, #666 55%, transparent 55%);
    flex: none;
  }

  .vbar { display: block; width: 1px; height: 30px; background: #d0d0d0; }
  .vbar.tall { height: 78px; margin-top: 13px; flex: none; }

  .select {
    height: 30px;
    box-sizing: border-box;
    border: 1px solid #8a8a8a;
    border-radius: 5px;
    display: flex;
    align-items: center;
    justify-content: space-between;
    padding: 0 7px 0 3px;
    font-size: 14px;
    color: #333;
  }
  .select span { font-family: "Noto Sans", sans-serif; }
  .select .calibri { font-family: "Lato", sans-serif; font-size: 15px; }

  .clip { width: 214px; }
  .paste {
    width: 64px;
    margin-left: 10px;
    padding-top: 11px;
    display: flex;
    flex-direction: column;
    align-items: center;
    color: #a8a8a8;
  }
  .paste-t { margin-top: 2px; line-height: 26px; }
  .paste-c { margin-top: 2px; }
  .small { padding-top: 3px; margin-left: 0; }
  .sm { height: 32px; display: flex; align-items: center; white-space: nowrap; position: relative; padding-left: 25px; }
  .sm .ic { position: absolute; left: 0; top: 50%; transform: translateY(-50%); }
  .copy-c { margin-left: 16px; }

  .font { width: 291px; padding-left: 10px; box-sizing: border-box; }
  .font-r1 {
    display: grid;
    grid-template-columns: 144px 2px 62px 36px 28px;
    height: 30px;
    align-items: center;
  }
  .grow { font-size: 23px; display: flex; justify-content: center; align-items: center; color: #333; }
  .grow b { font-weight: 400; line-height: 30px; }
  .small-a b { font-size: 20px; }
  .grow .chev { border-color: #1e88d2; width: 4px; height: 4px; }
  .caret-up { transform: translate(1px, -7px) rotate(225deg); }
  .caret-down { transform: translate(1px, -10px) rotate(45deg); }
  .font-r2 {
    display: grid;
    grid-template-columns: 30px 32px 32px 16px 12px 22px 24px 2px 34px 12px 5px 34px 12px;
    margin-top: 9px;
    height: 30px;
    align-items: center;
    justify-items: center;
    color: #333;
    font-size: 15.5px;
  }
  .fb { font-weight: 700; font-family: "Liberation Sans", sans-serif; }
  .fi { font-family: "Liberation Serif", serif; font-size: 17px; }
  .fu { font-family: "Noto Sans", sans-serif; }
  .fcolor { display: flex; flex-direction: column; align-items: center; line-height: 18px; font-size: 17px; }
  .fcolor i { width: 20px; height: 5px; background: #ff0000; }

  .align { width: 362px; }
  .al-left { width: 168px; margin-left: 11px; padding-top: 14px; }
  .al-r1 {
    display: grid;
    grid-template-columns: 30px 32px 32px 4px 28px 16px;
    height: 30px;
    align-items: center;
    justify-items: center;
  }
  .al-on {
    width: 30px;
    height: 30px;
    box-sizing: border-box;
    background: #e6e6e6;
    border: 1px solid #8a8a8a;
    border-radius: 5px;
    display: flex;
    align-items: center;
    justify-content: center;
  }
  .al-r2 {
    display: grid;
    grid-template-columns: 30px 32px 32px 4px 32px 32px;
    margin-top: 9px;
    height: 30px;
    align-items: center;
    justify-items: center;
  }
  .al-right { padding: 9px 0 0 14px; }
  .al-item { height: 40px; display: flex; align-items: center; white-space: nowrap; position: relative; }
  .al-item svg, .wrap-ic { width: 22px; flex: none; }
  .wrap-ic { font-size: 12.5px; line-height: 12px; color: #444; }
  .wrap-ic i { color: #1e88d2; font-style: normal; font-size: 13px; }
  .merge-c { margin-left: 20px; }

  .num-g { width: 199px; padding-left: 11px; box-sizing: border-box; }
  .general { width: 179px; }
  .num-r2 {
    display: grid;
    grid-template-columns: 26px 22px 34px 30px 4px 32px 30px;
    margin-top: 9px;
    height: 30px;
    align-items: center;
    justify-items: center;
  }
  .big-sym { font-size: 20px; color: #333; line-height: 1; }
  .comma { font-family: "Liberation Serif", serif; font-weight: 700; font-size: 36px; margin-top: -22px; }
  .dec-ic { font-size: 12.5px; line-height: 13px; color: #444; text-align: right; }
  .dec-ic em { color: #1e88d2; font-style: normal; }

  .styles { width: 877px; }
  .bigbtn {
    display: flex;
    flex-direction: column;
    align-items: center;
    white-space: nowrap;
    line-height: 20px;
    flex: none;
  }
  .bigbtn svg { flex: none; }
  .bigbtn .chev { margin-left: 6px; }
  .bigbtn.low svg { margin-bottom: 2px; }
  .bigbtn .btm { margin: 11px 0 0 0; }
  .cond { width: 92px; margin-left: 9px; }
  .fmt { width: 74px; }
  .gallery {
    width: 687px;
    height: 78px;
    margin: 14px 0 0 2px;
    box-sizing: border-box;
    border: 1px solid #c8c8c8;
    border-radius: 6px;
    display: flex;
    padding-left: 1px;
    flex: none;
  }
  .g-grid {
    display: grid;
    grid-template-columns: 137px 133px 133px 133px 125px;
    grid-template-rows: 36px 27px;
    row-gap: 4px;
    padding-top: 2px;
    align-items: center;
    width: 661px;
    flex: none;
    font-size: 16.5px;
  }
  .st { box-sizing: border-box; white-space: nowrap; display: flex; align-items: center; width: 125px; height: 28px; padding-left: 6px; font-family: "Lato", sans-serif; }
  .st.normal { width: 133px; height: 36px; border: 1px solid #555; outline: 3px solid #f0f0f0; outline-offset: -4px; color: #000; padding-left: 9px; }
  .bad-s { background: #ffc7ce; color: #9c0006; }
  .good-s { background: #c6efce; color: #006100; }
  .neutral { background: #ffeb9c; color: #9c5700; }
  .calc { background: #f2f2f2; border: 1px solid #7f7f7f; color: #fa7d00; font-weight: 700; }
  .st.check { width: 124px; height: 27px; margin-left: 5px; background: #a5a5a5; border: 3px double #3f3f3f; color: #fff; font-weight: 700; padding-left: 3px; }
  .expl { color: #7f7f7f; font-style: italic; }
  .foll span { color: #954f72; text-decoration: underline; }
  .hyper span { color: #0563c1; text-decoration: underline; }
  .st.foll { padding-left: 6px; }
  .st.hyper { padding-left: 5px; }
  .st.input { height: 27px; background: #ffcc99; border: 1px solid #7f7f7f; color: #3f3f76; }
  .g-arrows {
    margin-left: 5px;
    width: 19px;
    border-left: 1px solid #d0d0d0;
    display: flex;
    flex-direction: column;
    flex: none;
  }
  .g-arrows span { flex: 1; display: flex; align-items: center; justify-content: center; border-bottom: 1px solid #d0d0d0; }
  .g-arrows span:last-child { border-bottom: 0; }
  .more { position: relative; }
  .more::before { content: ""; position: absolute; top: 9px; left: 5px; width: 9px; height: 1px; background: #444; }

  .cells { width: 180px; padding-left: 9px; box-sizing: border-box; }
  .cell-b { width: 54px; }

  .editing { width: 256px; padding-left: 15px; box-sizing: border-box; }
  .ed-small { width: 117px; }
  .sum-c { margin-left: 18px; }
  .near { margin-left: 7px; }
  .sort { width: 54px; }
  .find { width: 58px; }
  .analysis { width: 75px; }
  .an { width: 75px; }
  .collapse { position: absolute; right: 14px; bottom: 14px; width: 8px; height: 8px; }

  .az { font-family: "Noto Sans", sans-serif; font-size: 19px; fill: #555; text-anchor: middle; }
  .az.blue { fill: #1e88d2; }

  /* formula bar */
  .fbar {
    height: 49px;
    box-sizing: border-box;
    padding: 10px 10px 10px 11px;
    display: flex;
    flex: none;
  }
  .namebox {
    width: 125px;
    background: #fff;
    border: 1px solid #dadada;
    border-radius: 5px;
    box-sizing: border-box;
    display: flex;
    align-items: center;
    justify-content: space-between;
    padding: 0 10px 0 6px;
    font-size: 15.5px;
    color: #333;
  }
  .dots { width: 26px; display: flex; flex-direction: column; align-items: center; justify-content: center; gap: 3px; flex: none; }
  .dots i { width: 3px; height: 3px; background: #444; }
  .fxbox {
    width: 91px;
    background: #fff;
    border: 1px solid #dadada;
    border-radius: 5px;
    box-sizing: border-box;
    display: flex;
    align-items: center;
    padding-left: 9px;
    gap: 13px;
  }
  .fx { font-family: "Liberation Serif", serif; font-style: italic; font-size: 19px; color: #333; margin-left: 2px; }
  .finput {
    flex: 1;
    margin-left: 7px;
    background: #fff;
    border: 1px solid #dadada;
    border-radius: 5px;
    display: flex;
    align-items: center;
    justify-content: flex-end;
    padding-right: 8px;
  }

  /* sheet */
  .sheet {
    height: 1050px;
    display: flex;
    flex: none;
    font-family: "Lato", "Open Sans", sans-serif;
    border-bottom: 1px solid #d8d8d8;
    box-sizing: border-box;
  }
  .grid { width: 2535px; overflow: hidden; background: #fff; display: flex; flex-direction: column; flex: none; }
  .colhead {
    height: 21px;
    display: flex;
    flex: none;
    background: #f0f0f0;
    border-bottom: 1.5px solid #ababab;
    box-sizing: content-box;
  }
  .corner { width: 34px; flex: none; position: relative; }
  .corner i {
    position: absolute;
    right: 3px;
    bottom: 2px;
    border: solid transparent;
    border-width: 0 0 17px 17px;
    border-bottom-color: #dcdcdc;
  }
  .ch {
    width: 80px;
    flex: none;
    box-sizing: border-box;
    border-right: 1px solid #d4d4d4;
    text-align: center;
    font-size: 15.5px;
    line-height: 22px;
    color: #444;
    padding-left: 2px;
  }
  .ch.a { width: 245px; }
  .ch.n { width: 112px; }

  .cellsarea { position: relative; flex: 1; overflow: hidden; }
  .row { display: flex; height: 24px; font-size: 16.4px; color: #000; }
  .rh {
    width: 34px;
    flex: none;
    box-sizing: border-box;
    background: #f0f0f0;
    border-right: 1.500px solid #ababab;
    border-bottom: 1px solid #d8d8d8;
    text-align: center;
    color: #444;
    font-size: 16.5px;
    line-height: 26px;
    overflow: hidden;
  }
  .c { box-sizing: border-box; line-height: 27px; white-space: nowrap; flex: none; }
  .c.a { width: 245px; padding-left: 3.500px; }
  .num { width: 80px; text-align: right; padding-right: 3px; font-size: 16px; }
  .c.n { width: 112px; text-align: center; border-left: 3px solid #000; padding-right: 3px; font-size: 16px; }

  .bad { background: #ffc7ce; color: #9c0006; }
  .good { background: #c6efce; color: #006100; }
  .yel { background: #fff899; color: #9c5700; }

  .r1 { height: 36px; }
  .r1 .rh { line-height: 42px; }
  .title { font-size: 24.5px; font-weight: 700; line-height: 38px; padding-left: 4px !important; }
  .r2 { height: 25px; }
  .r2 .c.a { line-height: 27px; letter-spacing: 0.2px; }
  .startdate {
    width: 80px;
    height: 27px;
    margin-top: -1px;
    background: #ffff99;
    border: 2.500px solid #000;
    color: #0000ff;
    text-align: right;
    padding-right: 1px;
    line-height: 23px;
    position: relative;
    font-size: 16px;
  }
  .r3 { height: 16px; }
  .r3 .rh { line-height: 17px; }
  .r4 .c { font-weight: 700; height: 24px; border-bottom: 2px solid #000; line-height: 25px; font-size: 15.5px; }
  .r4 .c.a { font-size: 16px; }
  .last .c { border-bottom: 1.500px solid #000; }
  .r10 { height: 28px; }
  .r10 .c { height: 28px; font-weight: 700; font-size: 17.500px; border-bottom: 1.500px solid #000; line-height: 29px; }
  .r10 .rh { line-height: 29px; }
  .r11 { height: 23px; border-top: 0; box-shadow: inset 0 1px 0 #a6a6a6; }
  .r11 .rh { line-height: 27px; }
  .r12 { height: 2px; }
  .r13 { height: 23px; }
  .r13 .rh { line-height: 24px; }

  .charts {
    position: absolute;
    left: 33px;
    top: 273.500px;
    width: 1319px;
    height: 755px;
    display: flex;
    flex-direction: column;
    background: #f2f2f2;
    border-top: 1.500px solid #000;
    border-right: 1.500px solid #000;
    box-sizing: border-box;
  }
  .charts svg { display: block; flex: none; }
  .chart1 { margin-top: -1.500px; border-bottom: 0; }
  .chart2 { border-top: 1.500px solid #000; }

  .gridline { stroke: #d9d9d9; stroke-width: 1.200; }
  .ctitle { font-family: "Lato", sans-serif; font-weight: 700; font-size: 22px; fill: #7f7f7f; }
  .axis { font-family: "Lato", sans-serif; font-size: 13.500px; fill: #808080; }
  .leg { font-family: "Lato", sans-serif; font-size: 15px; fill: #7f7f7f; }

  .vscroll {
    flex: 1;
    background: #f6f6f6;
    display: flex;
    flex-direction: column;
    align-items: center;
    position: relative;
  }
  .tri { display: block; width: 0; height: 0; border: 6px solid transparent; flex: none; }
  .up-t { border-bottom: 9px solid #707070; border-top: 0; margin-top: 6px; }
  .down-t { border-top: 9px solid #707070; border-bottom: 0; margin-top: auto; margin-bottom: 4px; }
  .vthumb { width: 12px; height: 426px; margin-top: 9px; background: #707070; border-radius: 6px; }

  /* sheet tabs */
  .sheettabs {
    height: 40px;
    flex: none;
    display: flex;
    align-items: center;
    font-size: 16px;
    color: #222;
  }
  .navs { width: 141.500px; box-sizing: border-box; padding-left: 32px; display: flex; gap: 31px; flex: none; }
  .st-tab {
    height: 30px;
    box-sizing: border-box;
    border-radius: 6px;
    display: flex;
    align-items: center;
    justify-content: center;
    flex: none;
    white-space: nowrap;
  }
  .instr { width: 113px; background: #ffff00; }
  .tabsep { width: 1px; height: 24px; background: #cfcfcf; margin: 0 4.500px; flex: none; }
  .dash {
    width: 109px;
    height: 35px;
    align-self: flex-start;
    background: linear-gradient(#ffffff, #a7dcf1);
    border-radius: 0 0 6px 6px;
    box-shadow: 0 0 0 1px #dcdcdc;
    font-weight: 600;
    color: #3a4a50;
    position: relative;
  }
  .dash span { position: relative; top: -2px; }
  .dash::after {
    content: "";
    position: absolute;
    left: 10px;
    right: 10px;
    bottom: 3px;
    height: 2.500px;
    background: #107c41;
  }
  .pale { background: #ffff99; }
  .tables { width: 71px; }
  .kpi { width: 98px; }
  .helper { width: 70px; background: #fff; }
  .plus { margin-left: 50px; font-size: 24px; font-weight: 400; color: #444; line-height: 1; }
  .sdots { margin-left: 812px; }
  .hscroll {
    margin-left: 6px;
    width: 978px;
    height: 21px;
    background: #eeeeee;
    display: flex;
    align-items: center;
    flex: none;
    border-radius: 10px;
    box-sizing: border-box;
    padding: 0 6px;
  }
  .left-t { border-right: 9px solid #707070; border-left: 0; }
  .right-t { border-left: 9px solid #707070; border-right: 0; margin-left: auto; margin-right: 3px; }
  .hthumb { width: 902px; height: 11px; margin-left: 6px; background: #707070; border-radius: 6px; }

  /* status bar */
  .status {
    height: 27px;
    flex: none;
    display: flex;
    align-items: center;
    background: #f5f5f5;
    font-size: 13px;
    color: #444;
  }
  .ready { margin-left: 9px; width: 61px; }
  .st-ic { flex: none; }
  .st-ic2 { margin-left: 22px; flex: none; }
  .access { margin-left: 4px; font-size: 12.500px; }
  .views { margin-left: auto; height: 27px; display: flex; align-items: center; padding-right: 10px; }
  .view { width: 50px; height: 27px; display: flex; align-items: center; justify-content: center; }
  .view.active { background: #e0e0e0; }
  .zm { width: 14px; text-align: center; font-size: 16px; margin-left: 4px; }
  .slider { width: 125px; height: 1.500px; background: #555; margin: 0 3px; position: relative; }
  .slider i { position: absolute; left: 63px; top: -6px; width: 5px; height: 14px; background: #666; }
  .pct { margin-left: 14px; font-size: 12.500px; width: 32px; }

  /* taskbar */
  .taskbar {
    height: 50px;
    flex: none;
    background: #cfdfea;
    display: flex;
    align-items: center;
    color: #111;
  }
  .start { width: 60px; display: flex; justify-content: center; flex: none; }
  .winsearch {
    width: 360px;
    height: 50px;
    box-sizing: border-box;
    background: #fff;
    display: flex;
    align-items: center;
    padding-left: 15px;
    gap: 15px;
    font-size: 17.700px;
    color: #222;
    flex: none;
    position: relative;
  }
  .avocado { margin-left: auto; margin-right: 20px; }
  .slot {
    width: 62px;
    height: 50px;
    display: flex;
    align-items: center;
    justify-content: center;
    flex: none;
    position: relative;
  }
  .slot.first { width: 63px; }
  .slot.open::after {
    content: "";
    position: absolute;
    left: 6px;
    right: 5px;
    bottom: 0;
    height: 3px;
    background: #0078d4;
  }
  .slot.active::after { background: linear-gradient(90deg, #0078d4 80%, #5aa9e6 80%); }
  .up {
    width: 26px;
    height: 26px;
    border-radius: 50%;
    background: #14a800;
    color: #fff;
    font: 700 13px "Lato", sans-serif;
    display: flex;
    align-items: center;
    justify-content: center;
  }
  .tray { margin-left: auto; display: flex; align-items: center; height: 50px; padding-right: 31px; position: relative; }
  .weather { display: flex; align-items: center; font-size: 17px; }
  .temp { margin-left: 11px; }
  .sky { margin-left: 10px; }
  .tr { flex: none; }
  .t1 { margin-left: 30px; }
  .t2 { margin-left: 14px; }
  .t3 { margin-left: 12px; }
  .t4 { margin-left: 10px; }
  .t5 { margin-left: 8px; }
  .clock {
    margin-left: 16px;
    display: flex;
    flex-direction: column;
    align-items: center;
    font-size: 14px;
    line-height: 23px;
    width: 66px;
    white-space: nowrap;
  }
  .notif { margin-left: 22px; flex: none; }

  .xl-x { font: 700 11px "Liberation Sans", sans-serif; fill: #fff; }
  .ch-j { font: 700 13px "Lato", sans-serif; fill: #d8c8f0; }
  .badge-1 { font: 700 11px "Lato", sans-serif; fill: #fff; }
</style>
